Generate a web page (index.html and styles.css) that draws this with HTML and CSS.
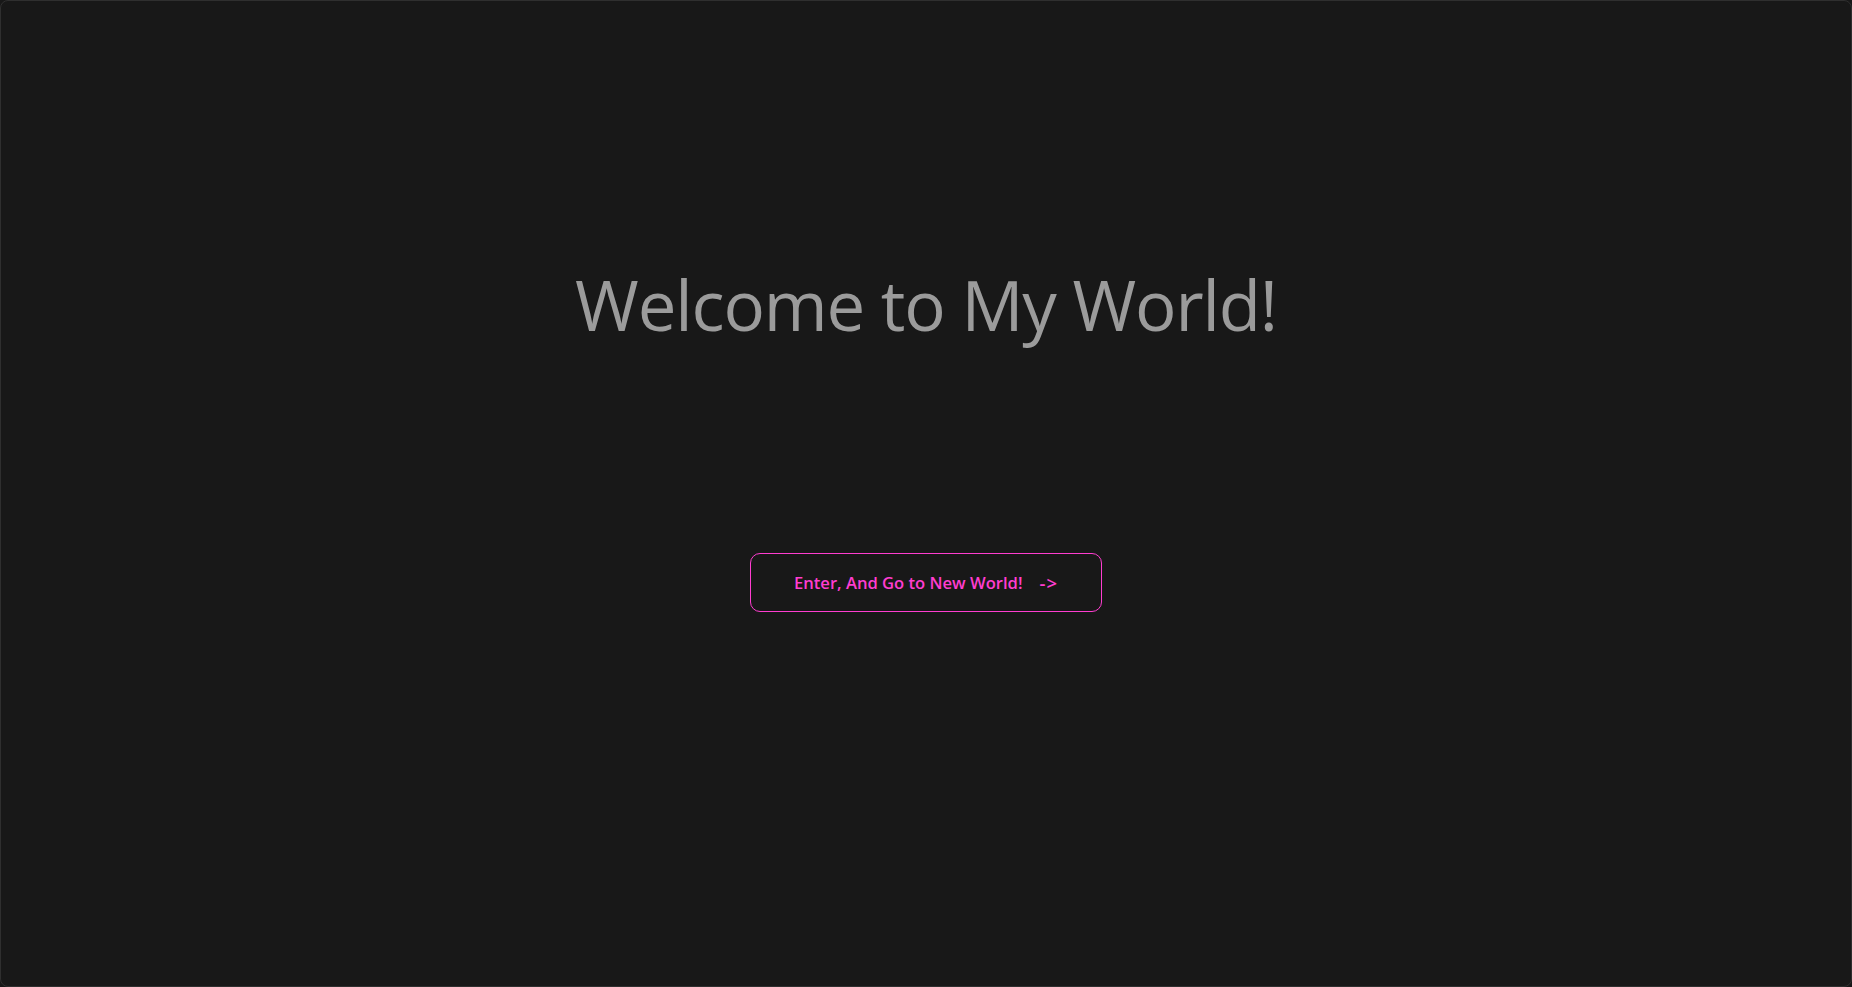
FILE: index.html
```html
<!DOCTYPE html>
<html lang="en">
<head>
<meta charset="utf-8">
<title>Welcome</title>
<link rel="stylesheet" href="styles.css">
</head>
<body>
<main class="stage">
  <h1 class="title">Welcome to My World!</h1>
  <button class="enter-btn" type="button"><span class="enter-label">Enter, And Go to New World!</span><span class="enter-arrow">-&gt;</span></button>
</main>
</body>
</html>
```
FILE: styles.css
```css
html, body {
  height: 100%;
}
body {
  margin: 0;
  background: #181818;
  box-sizing: border-box;
  border: 1px solid #2f2f2f;
  border-radius: 8px;
  font-family: "Open Sans", "Noto Sans", sans-serif;
  overflow: hidden;
}
.stage {
  display: flex;
  flex-direction: column;
  align-items: center;
  padding-top: 260px;
}
.title {
  margin: 0;
  font-size: 69px;
  line-height: 86px;
  font-weight: 400;
  color: #9b9b9b;
  letter-spacing: -1.15px;
}
.enter-btn {
  margin-top: 206px;
  height: 59px;
  box-sizing: border-box;
  display: inline-flex;
  align-items: center;
  gap: 17px;
  padding: 0 44px 0 43px;
  background: transparent;
  border: 1px solid #ff3dd0;
  border-radius: 10px;
  color: #ff3dd0;
  font-family: "Open Sans", "Noto Sans", sans-serif;
  font-size: 16.6px;
  font-weight: 600;
  cursor: pointer;
}
.enter-arrow {
  font-size: 18.5px;
  letter-spacing: 1px;
  margin-right: -1px;
}
```
